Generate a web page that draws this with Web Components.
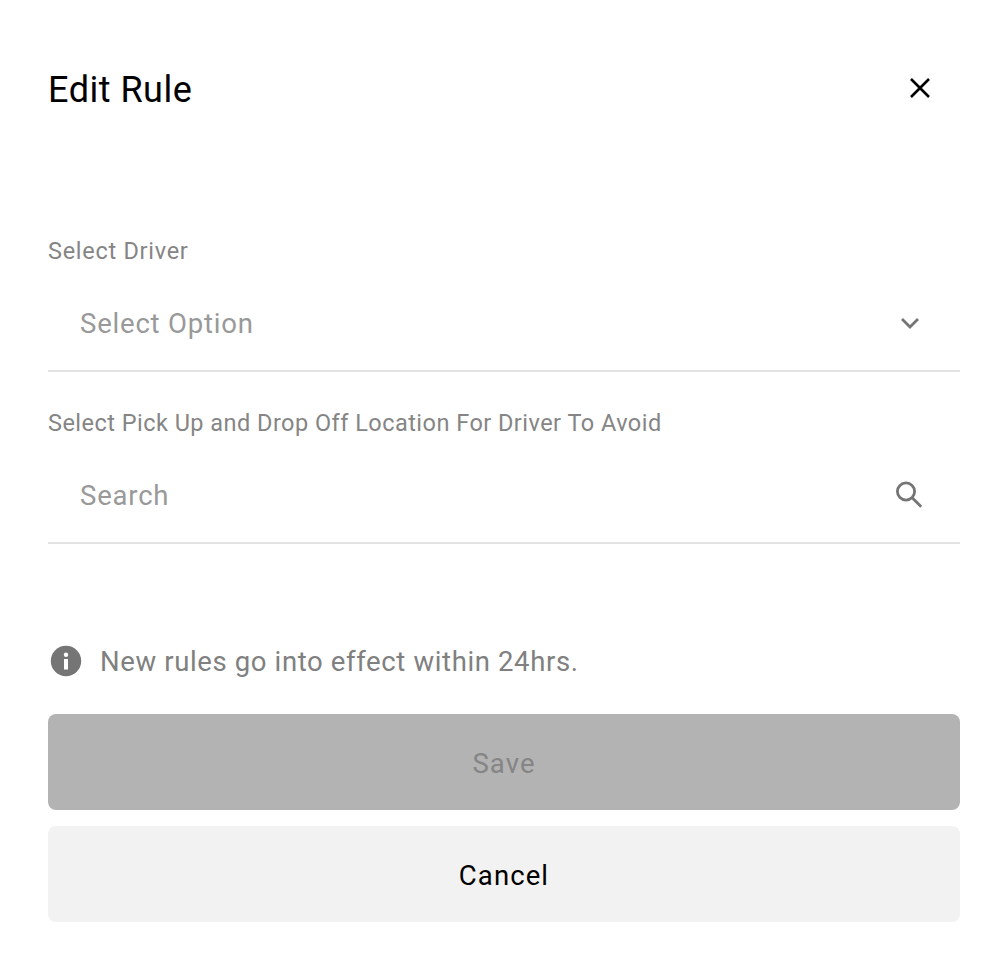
<!DOCTYPE html>
<html>
<head>
<meta charset="utf-8">
<style>
  html, body { margin: 0; background: #fff; }
  body { font-family: "Roboto", "Liberation Sans", sans-serif; }
</style>
</head>
<body>
<edit-rule-dialog>
  <form-field label="Select Driver" placeholder="Select Option" icon="chevron" spacing="0.72px"></form-field>
  <form-field label="Select Pick Up and Drop Off Location For Driver To Avoid" placeholder="Search" icon="search"></form-field>
</edit-rule-dialog>

<script>
// Form field: label, placeholder row and underline
class FormField extends HTMLElement {
  constructor() {
    super();
    this.attachShadow({ mode: 'open' });
  }

  connectedCallback() {
    const icons = {
      chevron: '<svg width="20" height="12" viewBox="0 0 20 12" fill="none" stroke="#757575" stroke-width="2.8"><path d="M2 2l8 8 8-8"/></svg>',
      search: '<svg width="28" height="28" viewBox="0 0 28 28" fill="none" stroke="#757575" stroke-width="2.8"><circle cx="10" cy="10.5" r="8.6"/><path d="M16.2 16.7l9 9"/></svg>'
    };
    this.shadowRoot.innerHTML = `
      <style>
        :host {
          display: block;
        }
        .label {
          height: 28px;
          line-height: 28px;
          font-size: 23.5px;
          letter-spacing: ${this.getAttribute('spacing') || '0.47px'};
          color: #858585;
          white-space: nowrap;
        }
        .row {
          height: 96px;
          margin-top: 11px;
          box-sizing: border-box;
          border-bottom: 2px solid #e2e2e2;
          padding: 0 36px 0 32px;
          display: flex;
          align-items: center;
          justify-content: space-between;
          font-size: 27.5px;
          letter-spacing: 0.8px;
          color: #999;
        }
        .icon {
          width: 28px;
          display: flex;
          justify-content: center;
        }
      </style>
      <div class="label">${this.getAttribute('label')}</div>
      <div class="row">
        <span>${this.getAttribute('placeholder')}</span>
        <span class="icon">${icons[this.getAttribute('icon')]}</span>
      </div>
    `;
  }
}

// Action button
class RuleButton extends HTMLElement {
  constructor() {
    super();
    this.attachShadow({ mode: 'open' });
    this.shadowRoot.innerHTML = `
      <style>
        :host {
          display: flex;
          align-items: center;
          justify-content: center;
          box-sizing: border-box;
          height: 96px;
          padding-top: 2px;
          border-radius: 8px;
          font-size: 27.5px;
          letter-spacing: 1.1px;
          background: #f2f2f2;
          color: #000;
        }
        :host([disabled]) {
          background: #b3b3b3;
          color: #858585;
        }
      </style>
      <slot></slot>
    `;
  }
}

// Edit rule dialog
class EditRuleDialog extends HTMLElement {
  constructor() {
    super();
    this.attachShadow({ mode: 'open' });
    this.shadowRoot.innerHTML = `
      <style>
        :host {
          display: block;
          width: 912px;
          padding: 64px 30px 44px 48px;
        }
        .head {
          height: 50px;
          display: flex;
          align-items: center;
          justify-content: space-between;
        }
        h1 {
          margin: 2px 0 0;
          font-weight: 400;
          font-size: 36px;
          letter-spacing: 0.5px;
          color: #000;
        }
        .close {
          display: flex;
          margin: 0 28px 3px 0;
        }
        .fields {
          margin-top: 123px;
          display: flex;
          flex-direction: column;
          gap: 37px;
        }
        .note {
          margin-top: 100px;
          height: 34px;
          display: flex;
          align-items: center;
          gap: 18px;
          padding-left: 2px;
          font-size: 27.5px;
          letter-spacing: 0.63px;
          color: #808080;
        }
        .note svg {
          flex: none;
        }
        .actions {
          margin-top: 36px;
          display: flex;
          flex-direction: column;
          gap: 16px;
        }
      </style>
      <div class="head">
        <h1>Edit Rule</h1>
        <span class="close">
          <svg width="24" height="24" viewBox="0 0 24 24" fill="none" stroke="#000" stroke-width="2.6"><path d="M3 3l18 18M21 3L3 21"/></svg>
        </span>
      </div>
      <div class="fields"><slot></slot></div>
      <div class="note">
        <svg width="32" height="32" viewBox="0 0 32 32">
          <circle cx="16" cy="16" r="15.2" fill="#757575"/>
          <circle cx="16" cy="9.8" r="2.2" fill="#fff"/>
          <rect x="14" y="14" width="4" height="10.5" fill="#fff"/>
        </svg>
        <span>New rules go into effect within 24hrs.</span>
      </div>
      <div class="actions">
        <rule-button disabled>Save</rule-button>
        <rule-button>Cancel</rule-button>
      </div>
    `;
  }
}

customElements.define('form-field', FormField);
customElements.define('rule-button', RuleButton);
customElements.define('edit-rule-dialog', EditRuleDialog);
</script>
</body>
</html>
